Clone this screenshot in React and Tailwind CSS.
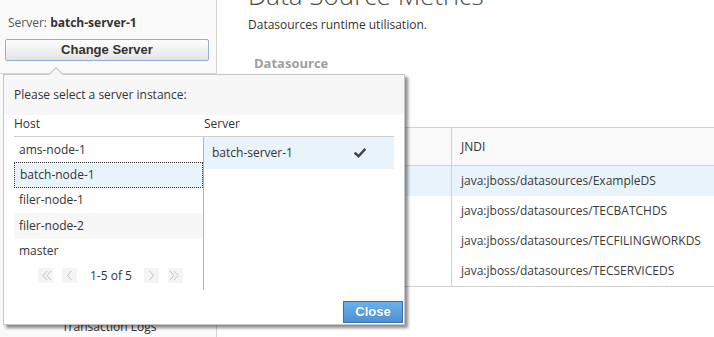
import React from "react";

const OS = { fontFamily: '"Open Sans", "Liberation Sans", sans-serif' };

function Chev({ dir = "left", double = false }) {
  const pts = dir === "left" ? ["M9 3 L5 7.5 L9 12", "M13 3 L9 7.5 L13 12"] : ["M6 3 L10 7.5 L6 12", "M2 3 L6 7.5 L2 12"];
  return (
    <div className="w-[15px] h-[15px] bg-[#f4f4f4] flex items-center justify-center">
      <svg width="15" height="15" viewBox="0 0 15 15" fill="none" stroke="#c4c4c4" strokeWidth="1">
        {double ? (
          <>
            <path d={pts[0]} />
            <path d={pts[1]} />
          </>
        ) : (
          <path d={dir === "left" ? "M9.5 3 L5.5 7.5 L9.5 12" : "M5.5 3 L9.5 7.5 L5.5 12"} />
        )}
      </svg>
    </div>
  );
}

export default function App() {
  const hosts = ["ams-node-1", "batch-node-1", "filer-node-1", "filer-node-2", "master"];
  const rows = [
    "java:jboss/datasources/ExampleDS",
    "java:jboss/datasources/TECBATCHDS",
    "java:jboss/datasources/TECFILINGWORKDS",
    "java:jboss/datasources/TECSERVICEDS",
  ];
  return (
    <div className="relative w-[714px] h-[337px] overflow-hidden bg-white flex text-[#333]" style={OS}>
      {/* Sidebar */}
      <div className="w-[217px] h-full border-r border-[#d4d4d4] bg-[#fafafa] flex flex-col">
        <div className="px-[5px] pt-[15px] pb-[12px] border-b border-[#d4d4d4]">
          <div className="pl-[3px] text-[12px] leading-[16px]">
            <span className="text-[#555]">Server: </span>
            <span className="font-bold">batch-server-1</span>
          </div>
          <button
            className="mt-[8px] w-[204px] h-[22px] border border-[#8fb0dc] rounded-[2px] bg-gradient-to-b from-[#fefefe] to-[#e4e4e4] text-[13px] font-bold text-[#333] flex items-center justify-center"
            style={{ fontFamily: '"Liberation Sans", Arial, sans-serif' }}
          >
            Change Server
          </button>
        </div>
        <div className="mt-auto mb-[2px] pl-[62px] text-[12px] leading-[16px] text-[#333]">Transaction Logs</div>
      </div>

      {/* Main */}
      <div className="flex-1 h-full overflow-hidden pl-[31px]">
        <h1 className="mt-[-20px] text-[26px] leading-[30px] font-light text-[#4d4d4d] whitespace-nowrap">Data Source Metrics</h1>
        <div className="mt-[6px] text-[12px] leading-[18px] text-[#333]">Datasources runtime utilisation.</div>
        <div className="mt-[20px] pl-[6px] text-[13px] leading-[18px] font-bold text-[#a0a0a0]">Datasource</div>
        <div className="mt-[55px] w-[520px] border-t border-b border-[#d1d1d1] text-[12px]">
          <div className="flex h-[38px] bg-[#f9f9f9] border-b border-[#d1d1d1]">
            <div className="w-[204px] border-r border-[#d1d1d1]" />
            <div className="flex items-center pl-[9px] text-[#333]">JNDI</div>
          </div>
          {rows.map((r, i) => (
            <div key={r} className={`flex h-[30px] ${i === 0 ? "bg-[#e8f3fb]" : ""}`}>
              <div className="w-[204px] border-r border-[#d1d1d1]" />
              <div className="flex items-center pl-[9px] text-[#3a3a3a]">{r}</div>
            </div>
          ))}
        </div>
      </div>

      {/* Popup */}
      <div className="absolute left-[3px] top-[74px] w-[402px] h-[251px] border border-[#c6c6c6] bg-white shadow-[3px_3px_3px_rgba(0,0,0,0.45)] z-10 flex flex-col">
        <div className="absolute left-[47px] top-[-6px] w-[10px] h-[10px] rotate-45 bg-[#f7f7f7] border-l border-t border-[#c6c6c6]" />
        <div className="relative h-[40px] bg-[#f7f7f7] flex items-center pl-[10px] text-[12px]">
          Please select a server instance:
        </div>
        <div className="mx-[10px] text-[12px]">
          <div className="flex h-[22px] border-b border-[#cfcfcf] leading-[16px] pt-[1px]">
            <div className="w-[190px]">Host</div>
            <div>Server</div>
          </div>
          <div className="flex h-[153px]">
            <div className="w-[189px] flex flex-col">
              {hosts.map((h, i) => (
                <div
                  key={h}
                  className={`h-[25.4px] flex items-center ${
                    i === 1
                      ? "bg-[#e8f3fb] border border-dotted border-[#333] pl-[5px]"
                      : i === 3
                      ? "bg-[#f7f7f7] pl-[5px]"
                      : "pl-[5px]"
                  }`}
                >
                  {h}
                </div>
              ))}
              <div className="mt-[4px] h-[15px] flex items-center pl-[24px]">
                <Chev dir="left" double />
                <div className="ml-[9px]">
                  <Chev dir="left" />
                </div>
                <div className="ml-[13px] leading-[15px]">1-5 of 5</div>
                <div className="ml-[12px]">
                  <Chev dir="right" />
                </div>
                <div className="ml-[9px]">
                  <Chev dir="right" double />
                </div>
              </div>
            </div>
            <div className="flex-1 border-l border-[#b4b4b4]">
              <div className="h-[32px] bg-[#e8f3fb] flex items-center pl-[8px]">
                <span>batch-server-1</span>
                <svg className="ml-auto mr-[28px]" width="12" height="10" viewBox="0 0 12 10" fill="none" stroke="#444" strokeWidth="2.4" strokeLinecap="square">
                  <path d="M1.5 5.5 L4.5 8.2 L10.5 1.8" />
                </svg>
              </div>
            </div>
          </div>
        </div>
        <div className="mt-auto flex justify-end pr-[1px] pb-[1px]">
          <button
            className="w-[60px] h-[22px] border border-[#3a6ea5] bg-gradient-to-b from-[#6db1ea] to-[#4b91d5] text-white text-[13px] font-bold flex items-center justify-center [text-shadow:0_0_1px_rgba(0,0,0,0.3)]"
            style={{ fontFamily: '"Liberation Sans", Arial, sans-serif' }}
          >
            Close
          </button>
        </div>
      </div>
    </div>
  );
}
